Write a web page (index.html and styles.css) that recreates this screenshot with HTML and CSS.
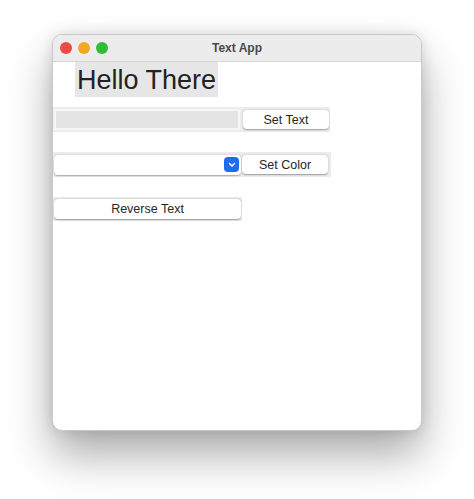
FILE: index.html
```html
<!DOCTYPE html>
<html lang="en">
<head>
    <meta charset="UTF-8">
    <title>Text App</title>
    <link rel="stylesheet" href="styles.css">
</head>
<body>
    <div class="window">
        <div class="titlebar">
            <div class="lights">
                <span class="light red"></span>
                <span class="light yellow"></span>
                <span class="light green"></span>
            </div>
            <span class="title">Text App</span>
        </div>

        <div class="content">
            <div class="label">Hello There</div>

            <div class="panel row-text">
                <div class="field"></div>
                <button class="btn btn-small">Set Text</button>
            </div>

            <div class="panel row-color">
                <div class="select">
                    <span class="chevron">
                        <svg width="8" height="6" viewBox="0 0 8 6">
                            <path d="M1.5 1.5 L4 4 L6.5 1.5" fill="none" stroke="#fff" stroke-width="1.5" stroke-linecap="round" stroke-linejoin="round"/>
                        </svg>
                    </span>
                </div>
                <button class="btn btn-small">Set Color</button>
            </div>

            <div class="panel row-reverse">
                <button class="btn btn-wide">Reverse Text</button>
            </div>
        </div>
    </div>
</body>
</html>
```

FILE: styles.css
```css
* {
    margin: 0;
    padding: 0;
    box-sizing: border-box;
}

html {
    background: #fff;
}

body {
    font-family: "Liberation Sans", Arial, sans-serif;
    background: #fff;
    min-height: 499px;
    padding: 34px 0 0 52px;
}

.window {
    width: 370px;
    height: 397px;
    background: #fff;
    border-radius: 10px;
    overflow: hidden;
    border: 1px solid #c8c8c8;
    box-shadow: 0 24px 44px rgba(0, 0, 0, 0.33), 0 0 14px rgba(0, 0, 0, 0.12);
}

.titlebar {
    height: 27px;
    background: #ececec;
    border-bottom: 1px solid #d6d6d6;
    display: flex;
    align-items: center;
    position: relative;
}

.lights {
    display: flex;
    gap: 6px;
    padding-left: 7px;
}

.light {
    width: 12px;
    height: 12px;
    border-radius: 50%;
    display: block;
}

.red { background: #ee4a45; }
.yellow { background: #f5a623; }
.green { background: #2fbd38; }

.title {
    position: absolute;
    left: 0;
    right: 0;
    text-align: center;
    font-size: 12px;
    font-weight: bold;
    color: #4a4a4a;
}

.content {
    display: flex;
    flex-direction: column;
    align-items: flex-start;
}

.label {
    margin-left: 22px;
    height: 35px;
    padding: 0 2px;
    background: #e6e6e6;
    font-size: 27px;
    line-height: 36px;
    color: #222;
}

.panel {
    background: #ececec;
    display: flex;
    align-items: center;
    padding: 2px 1px 2px 1px;
    gap: 3px;
}

.row-text {
    margin-top: 10px;
    width: 277px;
    height: 25px;
}

.row-color {
    margin-top: 20px;
    width: 278px;
    height: 25px;
    gap: 1px;
}

.row-reverse {
    margin-top: 20px;
    width: 189px;
    height: 24px;
}

.field {
    width: 186px;
    height: 21px;
    background: #e4e4e4;
    border: 2px solid #f6f6f6;
}

.select {
    width: 187px;
    height: 20px;
    background: #fff;
    border-radius: 4px;
    box-shadow: 0 0.5px 1.5px rgba(0, 0, 0, 0.3);
    display: flex;
    align-items: center;
    justify-content: flex-end;
    padding-right: 2px;
}

.chevron {
    width: 15px;
    height: 15px;
    border-radius: 4px;
    background: #1f6cf0;
    display: flex;
    align-items: center;
    justify-content: center;
}

.btn {
    height: 19px;
    background: #fff;
    border: none;
    border-radius: 4px;
    box-shadow: 0 0.5px 1.5px rgba(0, 0, 0, 0.35);
    font-family: "Liberation Sans", Arial, sans-serif;
    font-size: 12.5px;
    color: #262626;
}

.btn-small {
    width: 86px;
}

.btn-wide {
    width: 187px;
    height: 20px;
}
```
